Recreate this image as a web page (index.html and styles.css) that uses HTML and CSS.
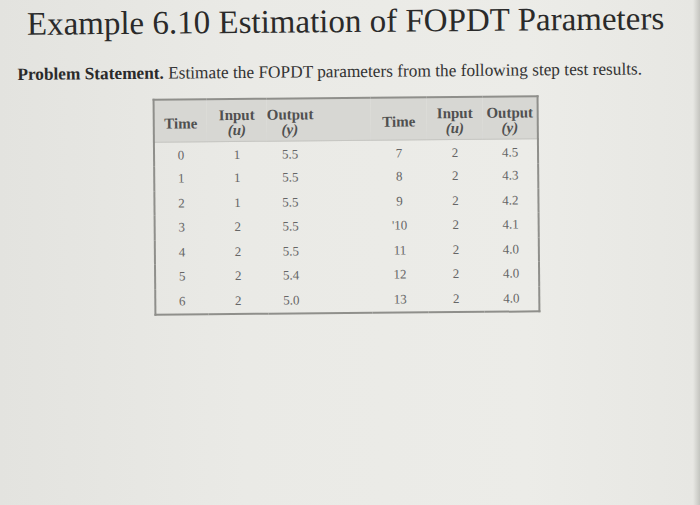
FILE: index.html
```html
<!DOCTYPE html>
<html>
<head>
<meta charset="utf-8">
<link rel="stylesheet" href="styles.css">
</head>
<body>
<div class="page">
  <h1 class="title">Example 6.10 Estimation of FOPDT Parameters</h1>
  <p class="statement"><b>Problem Statement.</b> Estimate the FOPDT parameters from the following step test results.</p>
  <div class="table-wrap">
    <table class="data">
      <thead>
        <tr>
          <th class="c1">Time</th>
          <th class="c2">Input<br><i>(u)</i></th>
          <th class="c3">Output<br><i>(y)</i></th>
          <th class="c4">Time</th>
          <th class="c5">Input<br><i>(u)</i></th>
          <th class="c6">Output<br><i>(y)</i></th>
        </tr>
      </thead>
      <tbody>
        <tr><td>0</td><td>1</td><td>5.5</td><td>7</td><td>2</td><td>4.5</td></tr>
        <tr><td>1</td><td>1</td><td>5.5</td><td>8</td><td>2</td><td>4.3</td></tr>
        <tr><td>2</td><td>1</td><td>5.5</td><td>9</td><td>2</td><td>4.2</td></tr>
        <tr><td>3</td><td>2</td><td>5.5</td><td>'10</td><td>2</td><td>4.1</td></tr>
        <tr><td>4</td><td>2</td><td>5.5</td><td>11</td><td>2</td><td>4.0</td></tr>
        <tr><td>5</td><td>2</td><td>5.4</td><td>12</td><td>2</td><td>4.0</td></tr>
        <tr><td>6</td><td>2</td><td>5.0</td><td>13</td><td>2</td><td>4.0</td></tr>
      </tbody>
    </table>
  </div>
</div>
</body>
</html>
```

FILE: styles.css
```css
html, body {
  margin: 0;
  padding: 0;
}
body {
  width: 700px;
  height: 505px;
  overflow: hidden;
  background: linear-gradient(90deg, #e3e3df 0%, #eaeae6 35%, #ececE8 75%, #e7e7e3 99%, #c4c4bf 100%);
  font-family: "Liberation Serif", "Times New Roman", serif;
}
.page {
  height: 505px;
  box-sizing: border-box;
  transform: rotate(-0.5deg);
  transform-origin: 350px 150px;
}
.title {
  margin: 0;
  padding: 4px 0 0 28px;
  font-size: 33px;
  font-weight: normal;
  color: #2a2a2a;
  line-height: 34px;
  white-space: nowrap;
}
.statement {
  margin: 0;
  padding: 24px 0 0 18px;
  font-size: 17.3px;
  line-height: 20px;
  color: #333;
  white-space: nowrap;
}
.statement b {
  color: #2a2a2a;
}
.table-wrap {
  padding: 15px 0 0 153px;
}
.data {
  width: 386px;
  table-layout: fixed;
  border-collapse: collapse;
  border: 2px solid #8f8f8b;
  color: #666;
  font-size: 13px;
}
.data thead tr {
  background: #d7d7d3;
  border-bottom: 1px solid #c6c6c2;
}
.data th {
  font-weight: bold;
  color: #505050;
  font-size: 15px;
  line-height: 15px;
  height: 36px;
  padding: 5px 0 0;
  text-align: center;
  vertical-align: middle;
}
.data th i {
  font-weight: bold;
}
.data td {
  height: 24.5px;
  padding: 0;
  text-align: center;
  vertical-align: middle;
}
.data tbody tr:first-child td {
  height: 22px;
  padding-top: 2px;
}
.c1 { width: 52px; }
.c2 { width: 60px; }
.c3 { width: 46px; }
.c4 { width: 56px; }
.c5 { width: 56px; }
.c6 { width: 54px; }
.data th:nth-child(3),
.data td:nth-child(3) { padding-right: 58px; }
```
